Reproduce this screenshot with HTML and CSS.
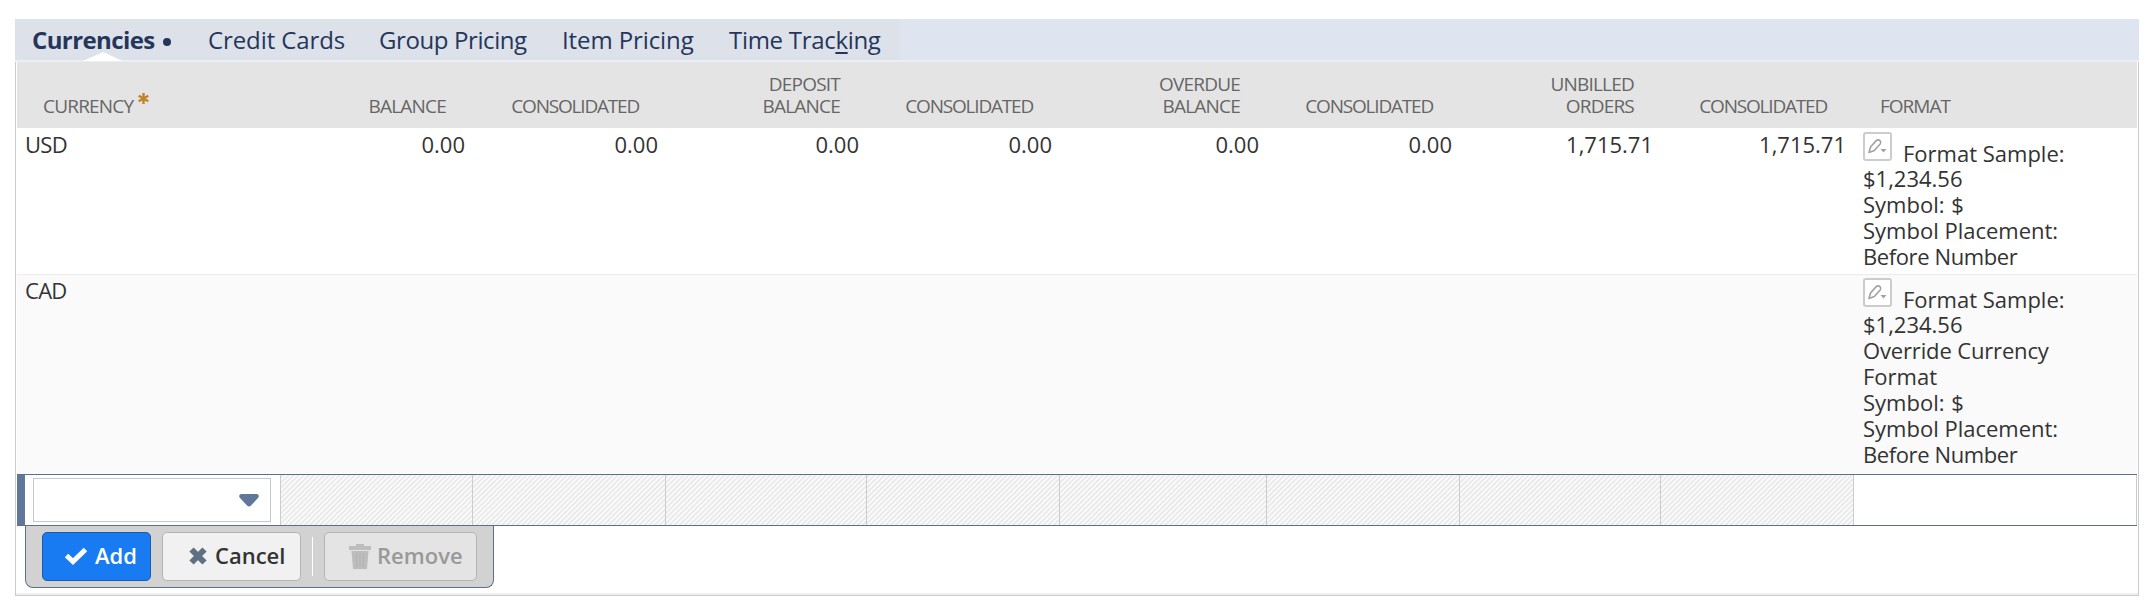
FILE: index.html
```html
<!DOCTYPE html>
<html lang="en">
<head>
<meta charset="utf-8">
<title>Currencies</title>
<link rel="stylesheet" href="styles.css">
</head>
<body>
<svg class="defs" width="0" height="0">
  <symbol id="edit" viewBox="2 2 25 25">
    <path d="M6 20.500 L7.500 15 L13.200 8.600 Q15.200 7 17 8.600 Q18.500 10.300 17.200 12 L11.300 18.500 Z" fill="none" stroke="#a2a2a2" stroke-width="1.6" stroke-linejoin="round"/>
    <path d="M17.500 17 H23.500 L20.500 20.600 Z" fill="#a2a2a2"/>
  </symbol>
</svg>
<main class="panel">
  <nav class="tabs">
    <div class="tab-group">
      <a class="tab tab-active"><span class="t1">Currencies</span><i class="dot"></i></a>
      <a class="tab t2">Credit Cards</a>
      <a class="tab t3">Group Pricing</a>
      <a class="tab t4">Item Pricing</a>
      <a class="tab t5">Time Trac<u>k</u>ing</a>
    </div>
  </nav>
  <section class="grid">
    <div class="row head">
      <div class="first"><span>CURRENCY</span><svg class="star" width="11" height="11" viewBox="0 0 11 11"><path d="M5.500 0V11M.7 2.700 10.300 8.300M10.300 2.700 .7 8.300" stroke="#bf8526" stroke-width="2.4"/></svg></div>
      <div>BALANCE</div>
      <div class="cons">CONSOLIDATED</div>
      <div>DEPOSIT<br>BALANCE</div>
      <div class="cons">CONSOLIDATED</div>
      <div>OVERDUE<br>BALANCE</div>
      <div class="cons">CONSOLIDATED</div>
      <div>UNBILLED<br>ORDERS</div>
      <div class="cons">CONSOLIDATED</div>
      <div class="fmt-head">FORMAT</div>
    </div>
    <div class="row data usd">
      <div class="name">USD</div>
      <div>0.00</div><div>0.00</div><div>0.00</div><div>0.00</div><div>0.00</div><div>0.00</div>
      <div>1,715.71</div><div>1,715.71</div>
      <div class="fmt"><span class="line"><svg class="edit"><use href="#edit"/></svg><span>Format Sample:</span></span>$1,234.56<br>Symbol: <span class="sym">$</span><br>Symbol Placement:<br><span class="before">Before Number</span></div>
    </div>
    <div class="row data cad">
      <div class="name">CAD</div>
      <div></div><div></div><div></div><div></div><div></div><div></div><div></div><div></div>
      <div class="fmt"><span class="line"><svg class="edit"><use href="#edit"/></svg><span>Format Sample:</span></span>$1,234.56<br><span class="override">Override Currency</span><br>Format<br>Symbol: <span class="sym">$</span><br>Symbol Placement:<br><span class="before">Before Number</span></div>
    </div>
    <div class="row entry">
      <div class="pick"><div class="select"><svg width="20" height="13" viewBox="0 0 20 13"><path d="M2 0H18Q21 1 19 4L12 11.500Q10 13.500 8 11.500L1 4Q-1 1 2 0Z" fill="#607799"/></svg></div></div>
      <div class="off"></div><div class="off"></div><div class="off"></div><div class="off"></div><div class="off"></div><div class="off"></div><div class="off"></div><div class="off"></div>
      <div class="last"></div>
    </div>
    <div class="actions">
      <button class="btn add"><svg width="24" height="20" viewBox="0 0 24 20"><path d="M2.500 9.500 9 15.500 21.500 3.500" fill="none" stroke="#fff" stroke-width="5"/></svg><span>Add</span></button>
      <button class="btn cancel"><svg width="18" height="18" viewBox="0 0 18 18"><path d="M2.500 2.500 15.500 15.500M15.500 2.500 2.500 15.500" stroke="#5f7084" stroke-width="6"/></svg><span>Cancel</span></button>
      <i class="sep"></i>
      <button class="btn remove"><svg width="22" height="25" viewBox="0 0 22 25"><path d="M7 0H15V2H22V6H0V2H7ZM2.500 7H19.500L18 25H4Z" fill="#bdbdbd"/><path d="M7.500 9V22M11 9V22M14.500 9V22" stroke="#b3b3b3"/></svg><span>Remove</span></button>
    </div>
  </section>
</main>
</body>
</html>
```
FILE: styles.css
```css
* { box-sizing: border-box; }
body { margin: 0; background: #fff; font-family: "Trebuchet MS", "Open Sans", "Noto Sans", sans-serif; font-size: 22px; color: #333; }
.defs { position: absolute; }
.panel { margin: 19px 17px 0 15px; height: 577px; display: flex; flex-direction: column; }
.tabs { height: 43px; flex: none; background: #dfe5f0; border-bottom: 2px solid #ebeef5; }
.tab-group { width: 885px; height: 41px; background: #dce1ea; display: flex; padding-left: 17px; }
.tab { flex: none; line-height: 41px; font-size: 24px; color: #26365a; white-space: nowrap; letter-spacing: -0.1px; }
.tab-active { width: 176px; font-weight: 700; position: relative; display: flex; align-items: center; letter-spacing: -0.6px; }
.tab-active::after { content: ""; position: absolute; left: 51px; bottom: -1px; width: 40px; height: 9px; background: #fff; clip-path: polygon(50% 0, 100% 100%, 0 100%); }
.dot { position: absolute; left: 131px; top: 19px; width: 8px; height: 8px; border-radius: 50%; background: #26365a; }
.t2 { width: 171px; }
.t3 { width: 183px; letter-spacing: -0.4px; }
.t4 { width: 167px; }
.t5 { letter-spacing: -0.3px; }
.tab u { text-decoration-thickness: 2px; text-underline-offset: 3px; }
.grid { flex: 1; border: 1px solid #cbcbcb; border-top: 0; box-shadow: inset 0 -2px #efefef; padding: 0 1px; }
.row { display: grid; grid-template-columns: 263px 192px 193px 201px 193px 207px 193px 201px 193px 1fr; }
.head { height: 66px; background: #e4e4e4; color: #666; font-size: 19px; line-height: 22px; letter-spacing: -0.8px; text-align: right; align-items: end; padding-bottom: 11px; }
.head > div { padding-right: 26px; }
.head .cons { letter-spacing: -1.2px; }
.head .first { display: flex; padding-left: 26px; text-align: left; gap: 5px; letter-spacing: -0.8px; }
.star { margin-top: -2px; }
.head .fmt-head { text-align: left; padding: 0 0 0 27px; letter-spacing: -1px; }
.data { line-height: 26px; text-align: right; }
.data > div { padding: 3px 7px 0 8px; }
.data .name { text-align: left; letter-spacing: -0.7px; }
.usd { height: 146px; }
.cad { height: 200px; background: #fafafa; box-shadow: inset 0 1px #ebebeb; }
.data .fmt { text-align: left; padding: 3px 0 0 10px; white-space: nowrap; }
.line { display: flex; height: 34px; align-items: flex-start; gap: 11px; }
.line span { padding-top: 9px; }
.before { letter-spacing: -0.4px; }
.override { letter-spacing: -0.15px; }
.sym { padding-left: 1px; }
.edit { width: 29px; height: 29px; margin-top: 1px; border: 2px solid #ccc; border-radius: 3px; background: #fff; }
.entry { height: 52px; border-top: 1px solid #5f6f8b; border-bottom: 1px solid #5f6f8b; }
.pick { border-left: 8px solid #607799; padding: 3px 9px 3px 8px; }
.select { height: 44px; border: 1px solid #c4c9d0; display: flex; align-items: center; justify-content: flex-end; padding-right: 11px; }
.off { border-left: 1px solid #ccc; background: repeating-linear-gradient(135deg, #fefefe 0, #e6e6e6 1.8px, #fefefe 3.6px); }
.last { border-left: 1px solid #ccc; border-right: 1px solid #ccc; }
.actions { width: 469px; height: 62px; margin-left: 8px; background: #d2d2d2; border: 1px solid #5f6f8b; border-top: 0; border-radius: 0 0 8px 8px; padding: 6px 16px; display: flex; align-items: flex-start; }
.btn { height: 49px; flex: none; border: 1px solid #b4b4b4; border-radius: 5px; background: #f1f1f1; color: #333; font: 600 22px "Trebuchet MS", "Open Sans", sans-serif; padding: 0; display: flex; align-items: center; letter-spacing: 0; }
.btn span { padding-bottom: 3px; }
.btn svg { margin-bottom: 1px; }
.add { width: 109px; color: #fff; background: #187bf2; border-color: #1d59ad; padding-left: 21px; gap: 7px; }
.cancel { width: 139px; margin-left: 11px; padding-left: 26px; gap: 8px; }
.sep { width: 1px; height: 39px; margin: 5px 11px 0; background: #fff; }
.remove { width: 153px; background: #e4e4e4; color: #999; padding-left: 24px; gap: 6px; }
```
